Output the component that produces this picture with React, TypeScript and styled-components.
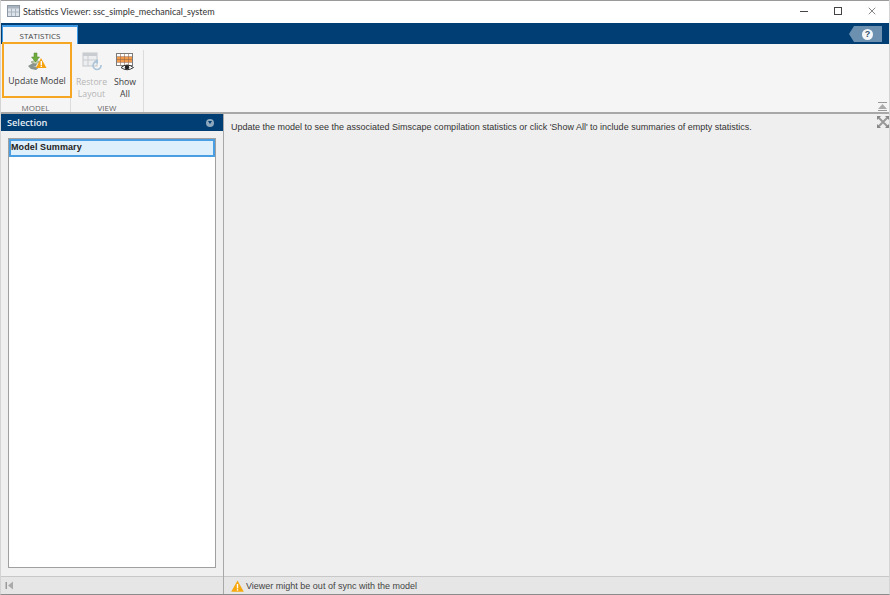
import * as React from "react";
import styled, { createGlobalStyle } from "styled-components";
import { X } from "lucide-react";

const GlobalStyle = createGlobalStyle`
  html, body { margin: 0; padding: 0; background: #fff; }
  body { font-family: "Liberation Sans", Arial, sans-serif; }
`;

const Frame = styled.div`
  width: 890px;
  height: 595px;
  display: flex;
  flex-direction: column;
  overflow: hidden;
  box-sizing: border-box;
  border-left: 1px solid #d4d4d4;
  border-right: 1px solid #d4d4d4;
  border-bottom: 1px solid #8c8c8c;
`;

const TitleBar = styled.div`
  height: 23px;
  flex: none;
  box-sizing: border-box;
  display: flex;
  align-items: center;
  padding: 0 0 2px 6px;
  background: #fff;
  border-top: 1px solid #9a9a9a;
`;

const TitleText = styled.span`
  font-family: Lato, sans-serif;
  font-size: 9px;
  color: #333;
  flex: 1;
  margin-left: 3px;
`;

const WinButton = styled.div`
  width: 34px;
  height: 20px;
  display: flex;
  align-items: center;
  justify-content: center;
  color: #333;
`;

const TabStrip = styled.div`
  height: 21px;
  flex: none;
  background: #003e74;
  display: flex;
  align-items: flex-end;
  justify-content: space-between;
  padding: 0 7px 0 1px;
`;

const Tab = styled.div`
  width: 76px;
  height: 19px;
  box-sizing: border-box;
  background: #f5f5f5;
  border-top: 2px solid #3f9be6;
  border-left: 1px solid #3f9be6;
  border-right: 1px solid #3f9be6;
  display: flex;
  align-items: center;
  justify-content: center;
  font-family: "Open Sans", sans-serif;
  font-size: 8px;
  color: #444;
`;

const HelpBadge = styled.div`
  width: 33px;
  height: 16px;
  margin-bottom: 2px;
  padding-left: 4px;
  box-sizing: border-box;
  background: #6b90b0;
  clip-path: polygon(5px 0, 100% 0, 100% 100%, 5px 100%, 0 50%);
  display: flex;
  align-items: center;
  justify-content: center;
`;

const HelpDot = styled.div`
  width: 11px;
  height: 11px;
  border-radius: 50%;
  background: #f4f6f8;
  color: #32526e;
  font-size: 9px;
  font-weight: bold;
  line-height: 11px;
  text-align: center;
`;

const Ribbon = styled.div`
  height: 70px;
  flex: none;
  position: relative;
  background: #f5f5f5;
  display: flex;
  border-bottom: 2px solid #a8a8a8;
  padding-top: 6px;
  box-sizing: border-box;
`;

const Section = styled.div<{ $width: number }>`
  width: ${(p) => p.$width}px;
  box-sizing: border-box;
  border-right: 1px solid #dcdcdc;
  display: flex;
  flex-direction: column;
  align-items: stretch;
`;

const SectionTools = styled.div`
  flex: 1;
  display: flex;
  padding-left: 4px;
`;

const SectionLabel = styled.div`
  font-family: "Open Sans", sans-serif;
  height: 9px;
  line-height: 9px;
  font-size: 8px;
  color: #666;
  text-align: center;
`;

const Tool = styled.div<{ $width: number; $off?: boolean }>`
  width: ${(p) => p.$width}px;
  display: flex;
  flex-direction: column;
  align-items: center;
  padding-top: 2px;
  gap: 4px;
  color: ${(p) => (p.$off ? "#b5b5b5" : "#3c3c3c")};
  font-family: "Open Sans", sans-serif;
  font-size: 8.7px;
  line-height: 12px;
  text-align: center;
`;

const Highlight = styled.div`
  position: absolute;
  left: 1px;
  top: -8px;
  width: 70px;
  height: 56px;
  box-sizing: border-box;
  border: 2px solid #f5a623;
  display: flex;
  flex-direction: column;
  align-items: center;
  padding-top: 8px;
  gap: 3px;
  font-family: "Open Sans", sans-serif;
  font-size: 8.7px;
  line-height: 12px;
  color: #3c3c3c;
`;

const ModelSection = styled(Section)`
  position: relative;
`;

const CollapseIcon = styled.div`
  position: absolute;
  right: 1px;
  bottom: 1px;
  line-height: 0;
`;

const Body = styled.div`
  flex: 1;
  min-height: 0;
  display: flex;
`;

const Sidebar = styled.div`
  width: 223px;
  flex: none;
  display: flex;
  flex-direction: column;
  background: #f0f0f0;
  border-right: 1px solid #a8a8a8;
  box-sizing: border-box;
`;

const SidebarHead = styled.div`
  height: 17px;
  flex: none;
  background: #003e74;
  display: flex;
  align-items: center;
  justify-content: space-between;
  padding: 0 9px 0 6px;
  color: #e8eef4;
  font-size: 9.2px;
  font-family: "Open Sans", sans-serif;
  font-weight: 600;
`;

const HeadDot = styled.div`
  width: 8px;
  height: 8px;
  border-radius: 50%;
  background: #8da7bd;
  display: flex;
  align-items: center;
  justify-content: center;
  &::after {
    content: "";
    border-left: 2.5px solid transparent;
    border-right: 2.5px solid transparent;
    border-top: 3px solid #003e74;
  }
`;

const ListBox = styled.div`
  flex: 1;
  margin: 7px 7px 8px 7px;
  background: #fff;
  border: 1px solid #a0a0a0;
`;

const ListItem = styled.div`
  height: 18px;
  box-sizing: border-box;
  border: 2px solid #4a9fe3;
  background: #dff0fd;
  font-size: 9px;
  font-weight: bold;
  line-height: 12px;
  padding-left: 0;
  color: #222;
  letter-spacing: 0.1px;
`;

const SideFoot = styled.div`
  height: 18px;
  flex: none;
  box-sizing: border-box;
  background: #e6e6e6;
  border-top: 1px solid #c8c8c8;
  display: flex;
  align-items: center;
  padding-left: 4px;
`;

const Main = styled.div`
  flex: 1;
  min-width: 0;
  display: flex;
  flex-direction: column;
  position: relative;
  background: #efefef;
`;

const MainText = styled.div`
  flex: 1;
  padding: 7px;
  font-size: 9px;
  line-height: 13px;
  color: #333;
`;

const ExpandIcon = styled.div`
  position: absolute;
  right: 0;
  top: 2px;
  line-height: 0;
`;

const StatusBar = styled.div`
  height: 18px;
  flex: none;
  box-sizing: border-box;
  background: #e6e6e6;
  border-top: 1px solid #c8c8c8;
  display: flex;
  align-items: center;
  padding-left: 7px;
  gap: 2px;
  font-size: 9px;
  color: #444;
`;

const UpdateIcon = () => (
  <svg width="20" height="20" viewBox="0 0 20 20">
    <path d="M1 14 L6 11 L10 12 L9 14 L6 14 L11 15 L15 13 L9 18 L4 17 Z" fill="#8a948f" />
    <path d="M4 10 L9 8 L13 10 L8 12 Z" fill="#c8d4b0" stroke="#7d8a70" strokeWidth="0.6" />
    <path d="M7 1 H10 V5 H12.5 L8.5 10 L4.5 5 H7 Z" fill="#6fae3c" stroke="#4f7f2a" strokeWidth="0.5" />
    <path d="M14 6 L19.5 16 H9 Z" fill="#f5a20f" />
    <rect x="13.6" y="9" width="1.4" height="4" fill="#fff" />
    <rect x="13.6" y="13.6" width="1.4" height="1.4" fill="#fff" />
  </svg>
);

const RestoreIcon = () => (
  <svg width="20" height="20" viewBox="0 0 20 20">
    <rect x="1" y="1" width="14" height="13" fill="#eceef0" stroke="#c4c8cc" />
    <rect x="1" y="1" width="14" height="3" fill="#c9ccd0" />
    <path d="M1 8 H15 M6 4 V14" stroke="#c9ccd0" />
    <path d="M19 13 A4 4 0 1 1 15 9.5" fill="none" stroke="#a9c3d8" strokeWidth="1.6" />
    <path d="M12 9.5 L16 7 V12 Z" fill="#a9c3d8" />
  </svg>
);

const ShowAllIcon = () => (
  <svg width="20" height="20" viewBox="0 0 20 20">
    <rect x="1.5" y="1.5" width="16" height="12" fill="#fff" stroke="#7a7a7a" />
    <rect x="2" y="5" width="15" height="5" fill="#f09a4a" />
    <path d="M2 4.5 H17 M2 7.5 H17 M2 10.5 H17 M5.5 2 V13 M9.5 2 V13 M13.5 2 V13" stroke="#9a6a4a" strokeWidth="0.6" />
    <path d="M6 15.5 Q12 10.5 18.5 15.5 Q12 20 6 15.5 Z" fill="#fff" stroke="#333" />
    <circle cx="12" cy="15.3" r="2.2" fill="#222" />
  </svg>
);

const WindowIcon = () => (
  <svg width="13" height="12" viewBox="0 0 13 12">
    <rect x="0.5" y="0.5" width="12" height="11" fill="#dde3ea" stroke="#8b97a3" />
    <rect x="1" y="1" width="11" height="2.5" fill="#a9b4bf" />
    <path d="M4.5 3.5 V11 M8.5 3.5 V11 M1 7 H12" stroke="#a9b4bf" />
  </svg>
);

const Warning = () => (
  <svg width="13" height="12" viewBox="0 0 13 12">
    <path d="M6.5 0.5 L12.8 11.8 H0.2 Z" fill="#f7a80d" />
    <rect x="5.8" y="4" width="1.4" height="4.4" fill="#fff" />
    <rect x="5.8" y="9.2" width="1.4" height="1.4" fill="#fff" />
  </svg>
);

export default function App() {
  return (
    <Frame>
      <GlobalStyle />
      <TitleBar>
        <WindowIcon />
        <TitleText>Statistics Viewer: ssc_simple_mechanical_system</TitleText>
        <WinButton>
          <svg width="10" height="10" viewBox="0 0 10 10">
            <path d="M1 5.5 H9" stroke="#444" />
          </svg>
        </WinButton>
        <WinButton>
          <svg width="10" height="10" viewBox="0 0 10 10">
            <rect x="1.5" y="1.5" width="7" height="7" fill="none" stroke="#444" />
          </svg>
        </WinButton>
        <WinButton>
          <X size={12} strokeWidth={1.2} />
        </WinButton>
      </TitleBar>
      <TabStrip>
        <Tab>STATISTICS</Tab>
        <HelpBadge>
          <HelpDot>?</HelpDot>
        </HelpBadge>
      </TabStrip>
      <Ribbon>
        <ModelSection $width={70}>
          <Highlight>
            <UpdateIcon />
            <span>Update Model</span>
          </Highlight>
          <SectionTools />
          <SectionLabel>MODEL</SectionLabel>
        </ModelSection>
        <Section $width={73}>
          <SectionTools>
            <Tool $width={33} $off>
              <RestoreIcon />
              <span>Restore Layout</span>
            </Tool>
            <Tool $width={34}>
              <ShowAllIcon />
              <span>
                Show
                <br />
                All
              </span>
            </Tool>
          </SectionTools>
          <SectionLabel>VIEW</SectionLabel>
        </Section>
        <CollapseIcon>
          <svg width="11" height="9" viewBox="0 0 11 9">
            <path d="M1 0.5 H10" stroke="#999" />
            <path d="M5.5 2 L10 7 H1 Z" fill="#aaa" />
            <path d="M1 8.5 H10" stroke="#999" />
          </svg>
        </CollapseIcon>
      </Ribbon>
      <Body>
        <Sidebar>
          <SidebarHead>
            <span>Selection</span>
            <HeadDot />
          </SidebarHead>
          <ListBox>
            <ListItem>Model Summary</ListItem>
          </ListBox>
          <SideFoot>
            <svg width="9" height="9" viewBox="0 0 9 9">
              <rect x="0.5" y="1" width="1.5" height="7" fill="#999" />
              <path d="M8 0.5 V8.5 L3 4.5 Z" fill="#aaa" />
            </svg>
          </SideFoot>
        </Sidebar>
        <Main>
          <ExpandIcon>
            <svg width="12" height="12" viewBox="0 0 12 12">
              <path d="M1 1 L11 11 M11 1 L1 11" stroke="#999" strokeWidth="2" />
              <path d="M0 0 H4 L0 4 Z M12 0 V4 L8 0 Z M0 12 V8 L4 12 Z M12 12 H8 L12 8 Z" fill="#888" />
            </svg>
          </ExpandIcon>
          <MainText>
            Update the model to see the associated Simscape compilation statistics or click 'Show All' to include
            summaries of empty statistics.
          </MainText>
          <StatusBar>
            <Warning />
            <span>Viewer might be out of sync with the model</span>
          </StatusBar>
        </Main>
      </Body>
    </Frame>
  );
}
